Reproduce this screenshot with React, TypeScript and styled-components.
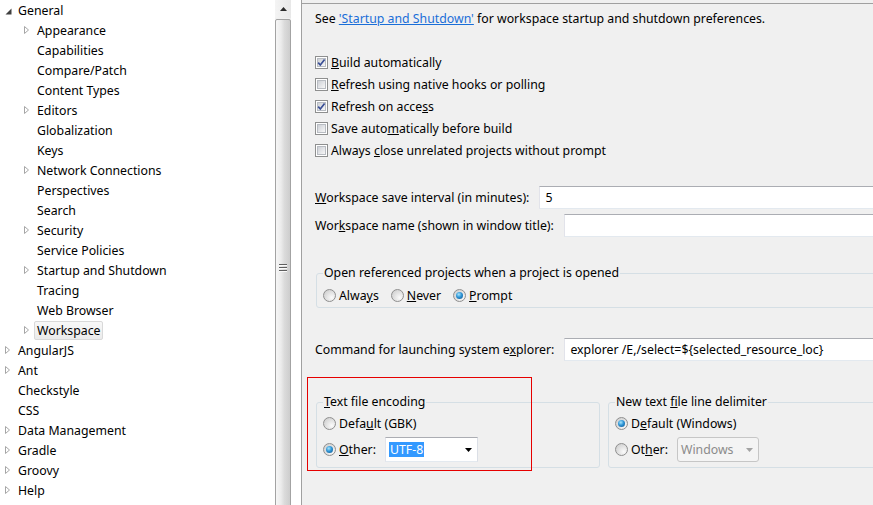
import React from "react";
import styled, { createGlobalStyle, css } from "styled-components";

const GlobalStyle = createGlobalStyle`
  html, body {
    margin: 0;
    padding: 0;
  }
  body {
    background: #f0f0f0;
    font-family: "Noto Sans", "Segoe UI", sans-serif;
    font-size: 12.3px;
    color: #000;
    overflow: hidden;
  }
`;

type Node = {
  label: string;
  depth: number;
  state?: "open" | "closed";
  selected?: boolean;
};

const tree: Node[] = [
  { label: "General", depth: 0, state: "open" },
  { label: "Appearance", depth: 1, state: "closed" },
  { label: "Capabilities", depth: 1 },
  { label: "Compare/Patch", depth: 1 },
  { label: "Content Types", depth: 1 },
  { label: "Editors", depth: 1, state: "closed" },
  { label: "Globalization", depth: 1 },
  { label: "Keys", depth: 1 },
  { label: "Network Connections", depth: 1, state: "closed" },
  { label: "Perspectives", depth: 1 },
  { label: "Search", depth: 1 },
  { label: "Security", depth: 1, state: "closed" },
  { label: "Service Policies", depth: 1 },
  { label: "Startup and Shutdown", depth: 1, state: "closed" },
  { label: "Tracing", depth: 1 },
  { label: "Web Browser", depth: 1 },
  { label: "Workspace", depth: 1, state: "closed", selected: true },
  { label: "AngularJS", depth: 0, state: "closed" },
  { label: "Ant", depth: 0, state: "closed" },
  { label: "Checkstyle", depth: 0 },
  { label: "CSS", depth: 0 },
  { label: "Data Management", depth: 0, state: "closed" },
  { label: "Gradle", depth: 0, state: "closed" },
  { label: "Groovy", depth: 0, state: "closed" },
  { label: "Help", depth: 0, state: "closed" },
];

const Window = styled.div`
  display: flex;
  width: 873px;
  height: 505px;
  overflow: hidden;
  background: #f0f0f0;
`;

/* ---------- left: preference tree ---------- */

const TreePane = styled.div`
  display: flex;
  flex-shrink: 0;
  width: 301px;
  background: #fff;
`;

const TreeList = styled.div`
  width: 275px;
  overflow: hidden;
`;

const TreeRow = styled.div<{ $depth: number }>`
  display: flex;
  align-items: center;
  height: 20px;
  padding-left: ${(p) => p.$depth * 19}px;
`;

const Toggle = styled.span`
  display: flex;
  align-items: center;
  flex-shrink: 0;
  box-sizing: border-box;
  width: 15px;
  height: 20px;
  padding-left: 5px;
`;

const NodeLabel = styled.span<{ $selected?: boolean }>`
  padding: 0 2px;
  line-height: 17px;
  border: 1px solid transparent;
  border-radius: 2px;
  white-space: nowrap;
  ${(p) =>
    p.$selected &&
    css`
      border-color: #d9d9d9;
      background: linear-gradient(#f8f8f8, #ebebeb);
    `}
`;

const ScrollBar = styled.div`
  display: flex;
  flex-direction: column;
  width: 16px;
  background: #f0f0f0;
`;

const ScrollButton = styled.div`
  display: flex;
  align-items: center;
  justify-content: center;
  height: 18px;
  background: linear-gradient(to right, #f4f4f4, #e8e8e8);
`;

const Thumb = styled.div`
  display: flex;
  align-items: center;
  justify-content: center;
  flex: 1;
  margin: 1px 0 -12px;
  border: 1px solid #a3a3a3;
  border-radius: 2px;
  background: linear-gradient(
    to right,
    #f6f6f6 0%,
    #ececec 35%,
    #dbdbdb 60%,
    #cdcdcd 100%
  );
`;

const Sash = styled.div`
  width: 10px;
  background: #fff;
`;

/* ---------- right: workspace page ---------- */

const PagePane = styled.div`
  flex: 1;
  padding-top: 3px;
  border-left: 1px solid #a0a0a0;
  overflow: hidden;
`;

const Page = styled.div`
  height: 100%;
  box-sizing: border-box;
  padding: 6px 0 0 13px;
  border-top: 1px solid #a0a0a0;
`;

const Info = styled.div`
  line-height: 18px;
  white-space: nowrap;
`;

const Link = styled.a`
  color: #1a6ed8;
  text-decoration: underline;
`;

const U = styled.span`
  text-decoration: underline;
`;

const CheckList = styled.div`
  margin-top: 23px;
`;

const OptionRow = styled.label`
  display: flex;
  align-items: center;
  gap: 3px;
  height: 22px;
  white-space: nowrap;
`;

const Box = styled.span`
  position: relative;
  flex-shrink: 0;
  box-sizing: border-box;
  width: 13px;
  height: 13px;
  padding: 1px;
  border: 1px solid #8e8f8f;
  background: #fff;

  &::before {
    content: "";
    display: block;
    box-sizing: border-box;
    width: 9px;
    height: 9px;
    border: 1px solid #b8bcc2;
    background: linear-gradient(135deg, #cdd0d6, #f7f7f7);
  }

  svg {
    position: absolute;
    left: 0;
    top: 0;
  }
`;

const Circle = styled.span<{ $on?: boolean }>`
  display: flex;
  align-items: center;
  justify-content: center;
  flex-shrink: 0;
  box-sizing: border-box;
  width: 13px;
  height: 13px;
  border: 1px solid #8f8f8f;
  border-radius: 50%;
  background: radial-gradient(circle at 70% 70%, #fbfbfb 0%, #dcdcdc 60%, #c8c8c8 100%);

  &::after {
    content: "";
    display: ${(p) => (p.$on ? "block" : "none")};
    width: 7px;
    height: 7px;
    border-radius: 50%;
    background: radial-gradient(circle at 40% 35%, #a8e6fc 0%, #2f95d6 45%, #0c4f86 100%);
  }
`;

const FieldRow = styled.div<{ $top: number }>`
  display: flex;
  align-items: center;
  gap: 10px;
  height: 23px;
  margin-top: ${(p) => p.$top}px;
  white-space: nowrap;
`;

const TextInput = styled.div`
  display: flex;
  align-items: center;
  flex: 1;
  box-sizing: border-box;
  height: 23px;
  margin-right: -20px;
  padding: 0 5px;
  background: #fff;
  border: 1px solid;
  border-color: #abadb3 #dbdfe6 #e3e9ef #e2e3ea;
`;

const Group = styled.fieldset<{ $top?: number; $width?: number }>`
  min-width: 0;
  margin: ${(p) => p.$top ?? 0}px 0 0 0;
  padding: 0 0 2px 6px;
  border: 1px solid #d5dfe5;
  border-radius: 3px;
  ${(p) =>
    p.$width
      ? css`
          width: ${p.$width}px;
          box-sizing: border-box;
          flex-shrink: 0;
        `
      : css`
          flex: 1;
        `}
`;

const GroupWide = styled(Group)`
  margin-left: 1px;
  margin-right: -20px;
`;

const Legend = styled.legend`
  padding: 0 1px;
  line-height: 18px;
  white-space: nowrap;
`;

const RadioLine = styled.div`
  display: flex;
  align-items: center;
  gap: 12px;
  height: 20px;
  margin-top: 3px;
`;

const Radio = styled.label`
  display: flex;
  align-items: center;
  gap: 3px;
  white-space: nowrap;
`;

const EncodingRow = styled.div`
  position: relative;
  display: flex;
  gap: 8px;
  margin: 32px -20px 0 1px;
`;

const ChoiceRow = styled.div<{ $h: number; $top: number }>`
  display: flex;
  align-items: center;
  gap: 9px;
  height: ${(p) => p.$h}px;
  margin-top: ${(p) => p.$top}px;
  white-space: nowrap;
`;

const GroupBody = styled.div`
  padding-bottom: 3px;
`;

const Combo = styled.div<{ $disabled?: boolean; $width: number }>`
  display: flex;
  align-items: center;
  box-sizing: border-box;
  width: ${(p) => p.$width}px;
  height: 25px;
  padding: 0 5px 0 3px;
  border: 1px solid;
  ${(p) =>
    p.$disabled
      ? css`
          color: #8b8b8b;
          background: #f4f4f4;
          border-color: #c6c6c6;
          border-radius: 3px;
        `
      : css`
          background: #fff;
          border-color: #abadb3 #dbdfe6 #e3e9ef #e2e3ea;
        `}

  svg {
    margin-left: auto;
  }
`;

const Selected = styled.span`
  padding: 0 1px;
  line-height: 15px;
  color: #fff;
  background: #3399ff;
`;

const Marker = styled.div`
  position: absolute;
  left: -9px;
  top: -16px;
  width: 225px;
  height: 94px;
  box-sizing: border-box;
  border: 1px solid #e60000;
  pointer-events: none;
`;

/* ---------- drawings ---------- */

const OpenArrow = () => (
  <svg width="7" height="7" viewBox="0 0 7 7" style={{ marginTop: 3 }}>
    <path d="M6.5 0.5 L6.5 6.5 L0.5 6.5 Z" fill="#404040" />
  </svg>
);

const ClosedArrow = () => (
  <svg width="6" height="8" viewBox="0 0 6 8">
    <path d="M0.5 0.5 L4.5 4 L0.5 7.5 Z" fill="#fff" stroke="#a6a6a6" />
  </svg>
);

const DownArrow = ({ color }: { color: string }) => (
  <svg width="7" height="4" viewBox="0 0 7 4">
    <path d="M0 0 H7 L3.5 4 Z" fill={color} />
  </svg>
);

const Grip = () => (
  <svg width="8" height="9" viewBox="0 0 8 9">
    {[0, 3, 6].map((y) => (
      <g key={y}>
        <rect x="0" y={y} width="8" height="1" fill="#5f5f5f" />
        <rect x="0" y={y + 1} width="8" height="1" fill="#fafafa" />
      </g>
    ))}
  </svg>
);

const CheckBox = ({ checked }: { checked?: boolean }) => (
  <Box>
    {checked && (
      <svg width="11" height="11" viewBox="0 0 11 11">
        <path
          d="M2.2 5.6 L4.3 8 L8.6 2.4"
          fill="none"
          stroke="#3a4f96"
          strokeWidth="1.7"
        />
      </svg>
    )}
  </Box>
);

const App = () => {
  return (
    <>
      <GlobalStyle />
      <Window>
        <TreePane>
          <TreeList>
            {tree.map((n) => (
              <TreeRow key={n.label} $depth={n.depth}>
                <Toggle>
                  {n.state === "open" && <OpenArrow />}
                  {n.state === "closed" && <ClosedArrow />}
                </Toggle>
                <NodeLabel $selected={n.selected}>{n.label}</NodeLabel>
              </TreeRow>
            ))}
          </TreeList>
          <ScrollBar>
            <ScrollButton>
              <svg width="7" height="4" viewBox="0 0 7 4">
                <path d="M3.5 0 L7 4 H0 Z" fill="#2b2b2b" />
              </svg>
            </ScrollButton>
            <Thumb>
              <Grip />
            </Thumb>
          </ScrollBar>
          <Sash />
        </TreePane>

        <PagePane>
          <Page>
            <Info>
              See <Link>'Startup and Shutdown'</Link> for workspace startup and
              shutdown preferences.
            </Info>

            <CheckList>
              <OptionRow>
                <CheckBox checked />
                <span>
                  <U>B</U>uild automatically
                </span>
              </OptionRow>
              <OptionRow>
                <CheckBox />
                <span>
                  <U>R</U>efresh using native hooks or polling
                </span>
              </OptionRow>
              <OptionRow>
                <CheckBox checked />
                <span>
                  Refresh on acce<U>s</U>s
                </span>
              </OptionRow>
              <OptionRow>
                <CheckBox />
                <span>
                  Save auto<U>m</U>atically before build
                </span>
              </OptionRow>
              <OptionRow>
                <CheckBox />
                <span>
                  Always <U>c</U>lose unrelated projects without prompt
                </span>
              </OptionRow>
            </CheckList>

            <FieldRow $top={25}>
              <span>
                <U>W</U>orkspace save interval (in minutes):
              </span>
              <TextInput>5</TextInput>
            </FieldRow>
            <FieldRow $top={5}>
              <span>
                Wor<U>k</U>space name (shown in window title):
              </span>
              <TextInput />
            </FieldRow>

            <GroupWide $top={27}>
              <Legend>Open referenced projects when a project is opened</Legend>
              <RadioLine>
                <Radio>
                  <Circle />
                  <span>
                    Alwa<U>y</U>s
                  </span>
                </Radio>
                <Radio>
                  <Circle />
                  <span>
                    <U>N</U>ever
                  </span>
                </Radio>
                <Radio>
                  <Circle $on />
                  <span>
                    <U>P</U>rompt
                  </span>
                </Radio>
              </RadioLine>
            </GroupWide>

            <FieldRow $top={30}>
              <span>
                Command for launching system e<U>x</U>plorer:
              </span>
              <TextInput>explorer /E,/select=${"{selected_resource_loc}"}</TextInput>
            </FieldRow>

            <EncodingRow>
              <Group $width={284}>
                <Legend>
                  <U>T</U>ext file encoding
                </Legend>
                <GroupBody>
                  <ChoiceRow $h={20} $top={2}>
                    <Radio>
                      <Circle />
                      <span>
                        Defa<U>u</U>lt (GBK)
                      </span>
                    </Radio>
                  </ChoiceRow>
                  <ChoiceRow $h={25} $top={4}>
                    <Radio>
                      <Circle $on />
                      <span>
                        <U>O</U>ther:
                      </span>
                    </Radio>
                    <Combo $width={93}>
                      <Selected>UTF-8</Selected>
                      <DownArrow color="#000" />
                    </Combo>
                  </ChoiceRow>
                </GroupBody>
              </Group>
              <Group>
                <Legend>
                  New text <U>f</U>ile line delimiter
                </Legend>
                <GroupBody>
                  <ChoiceRow $h={20} $top={2}>
                    <Radio>
                      <Circle $on />
                      <span>
                        D<U>e</U>fault (Windows)
                      </span>
                    </Radio>
                  </ChoiceRow>
                  <ChoiceRow $h={25} $top={4}>
                    <Radio>
                      <Circle />
                      <span>
                        Ot<U>h</U>er:
                      </span>
                    </Radio>
                    <Combo $width={82} $disabled>
                      <span>Windows</span>
                      <DownArrow color="#a3a3a3" />
                    </Combo>
                  </ChoiceRow>
                </GroupBody>
              </Group>
              <Marker />
            </EncodingRow>
          </Page>
        </PagePane>
      </Window>
    </>
  );
};

export default App;
